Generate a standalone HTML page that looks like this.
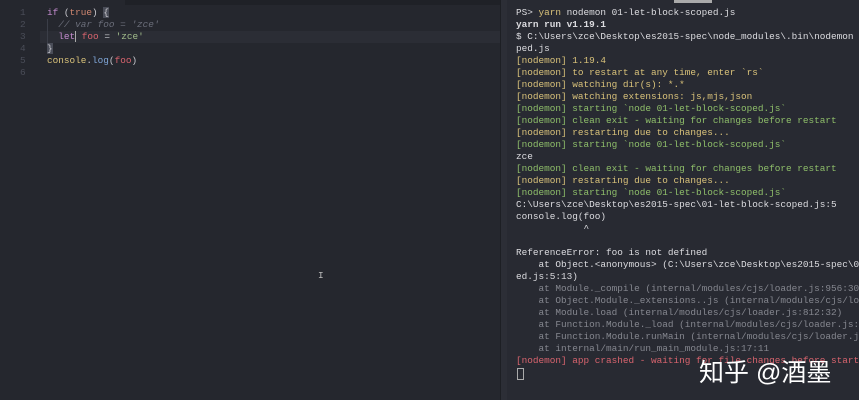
<!DOCTYPE html>
<html><head><meta charset="utf-8"><style>
body{margin:0;width:859px;height:400px;overflow:hidden;background:#26282f;font-family:"Liberation Mono",monospace;font-size:9.4px;}
.ed{position:absolute;left:0;top:0;width:500px;height:400px;background:#25272e;}
.div{position:absolute;left:500px;top:0;width:7px;height:400px;background:#2c2e36;border-left:1px solid #1d1f24;}
.term{position:absolute;left:507px;top:0;width:352px;height:400px;background:#282a32;}
.l{position:absolute;white-space:pre;line-height:12px;height:12px;}
.n{color:#4a4d58;left:20px}
.c{left:47px;color:#c9c9cf}
.t{left:9px;color:#dcdce0}
.g{color:#8fbf6a}.y{color:#d9c27a}.r{color:#d9646e}.dim{color:#85878f}.p{color:#c58cd0}.o{color:#d08770}.s{color:#a3be8c}.cm{color:#6b6e7a;font-style:italic}.b{color:#7fa6d8}
</style></head><body>
<div class="ed">
<div style="position:absolute;left:125px;top:0;width:375px;height:5px;background:#1f2127"></div>
<div style="position:absolute;left:40px;top:31px;width:460px;height:12px;background:#2b2d35"></div>
<div style="position:absolute;left:47px;top:19px;width:1px;height:32px;background:#3b3e48"></div>
<div class="l n" style="top:7px">1</div><div class="l n" style="top:19px">2</div><div class="l n" style="top:31px">3</div><div class="l n" style="top:43px">4</div><div class="l n" style="top:55px">5</div><div class="l n" style="top:67px">6</div>
<div class="l c" style="top:7px"><span class="p">if</span> (<span class="o">true</span>) <span style="background:#4a4d58">{</span></div>
<div class="l c" style="top:19px">  <span class="cm">// var foo = 'zce'</span></div>
<div class="l c" style="top:31px">  <span class="p">let</span><span style="border-left:1px solid #aaa"></span> <span class="r">foo</span> = <span class="s">'zce'</span></div>
<div class="l c" style="top:43px"><span style="background:#4a4d58">}</span></div>
<div class="l c" style="top:55px"><span class="y">console</span>.<span class="b">log</span>(<span class="r">foo</span>)</div>
<div class="l" style="left:318px;top:270px;color:#bbb">I</div>
</div>
<div class="div"></div>
<div class="term">
<div style="position:absolute;left:167px;top:0;width:38px;height:3px;background:#aaa"></div>
<div class="l t" style="top:7px">PS> <span class="y">yarn</span> nodemon 01-let-block-scoped.js</div>
<div class="l t" style="top:19px;font-weight:bold">yarn run v1.19.1</div>
<div class="l t" style="top:31px">$ C:\Users\zce\Desktop\es2015-spec\node_modules\.bin\nodemon</div>
<div class="l t" style="top:43px">ped.js</div>
<div class="l t y" style="top:55px">[nodemon] 1.19.4</div>
<div class="l t y" style="top:67px">[nodemon] to restart at any time, enter `rs`</div>
<div class="l t y" style="top:79px">[nodemon] watching dir(s): *.*</div>
<div class="l t y" style="top:91px">[nodemon] watching extensions: js,mjs,json</div>
<div class="l t g" style="top:103px">[nodemon] starting `node 01-let-block-scoped.js`</div>
<div class="l t g" style="top:115px">[nodemon] clean exit - waiting for changes before restart</div>
<div class="l t y" style="top:127px">[nodemon] restarting due to changes...</div>
<div class="l t g" style="top:139px">[nodemon] starting `node 01-let-block-scoped.js`</div>
<div class="l t" style="top:151px">zce</div>
<div class="l t g" style="top:163px">[nodemon] clean exit - waiting for changes before restart</div>
<div class="l t y" style="top:175px">[nodemon] restarting due to changes...</div>
<div class="l t g" style="top:187px">[nodemon] starting `node 01-let-block-scoped.js`</div>
<div class="l t" style="top:199px">C:\Users\zce\Desktop\es2015-spec\01-let-block-scoped.js:5</div>
<div class="l t" style="top:211px">console.log(foo)</div>
<div class="l t" style="top:223px">            ^</div>
<div class="l t" style="top:247px">ReferenceError: foo is not defined</div>
<div class="l t" style="top:259px">    at Object.&lt;anonymous&gt; (C:\Users\zce\Desktop\es2015-spec\01</div>
<div class="l t" style="top:271px">ed.js:5:13)</div>
<div class="l t dim" style="top:283px">    at Module._compile (internal/modules/cjs/loader.js:956:30)</div>
<div class="l t dim" style="top:295px">    at Object.Module._extensions..js (internal/modules/cjs/loader</div>
<div class="l t dim" style="top:307px">    at Module.load (internal/modules/cjs/loader.js:812:32)</div>
<div class="l t dim" style="top:319px">    at Function.Module._load (internal/modules/cjs/loader.js:724</div>
<div class="l t dim" style="top:331px">    at Function.Module.runMain (internal/modules/cjs/loader.js:10</div>
<div class="l t dim" style="top:343px">    at internal/main/run_main_module.js:17:11</div>
<div class="l t r" style="top:355px">[nodemon] app crashed - waiting for file changes before start</div>
<div style="position:absolute;left:10px;top:368px;width:5px;height:10px;border:1px solid #aaa"></div>
<div style="position:absolute;left:192px;top:357px;font-family:'Liberation Sans','Noto Sans CJK SC',sans-serif;font-size:25px;color:#fff;white-space:nowrap;line-height:32px">知乎 @酒墨</div>
</div>
</body></html>
